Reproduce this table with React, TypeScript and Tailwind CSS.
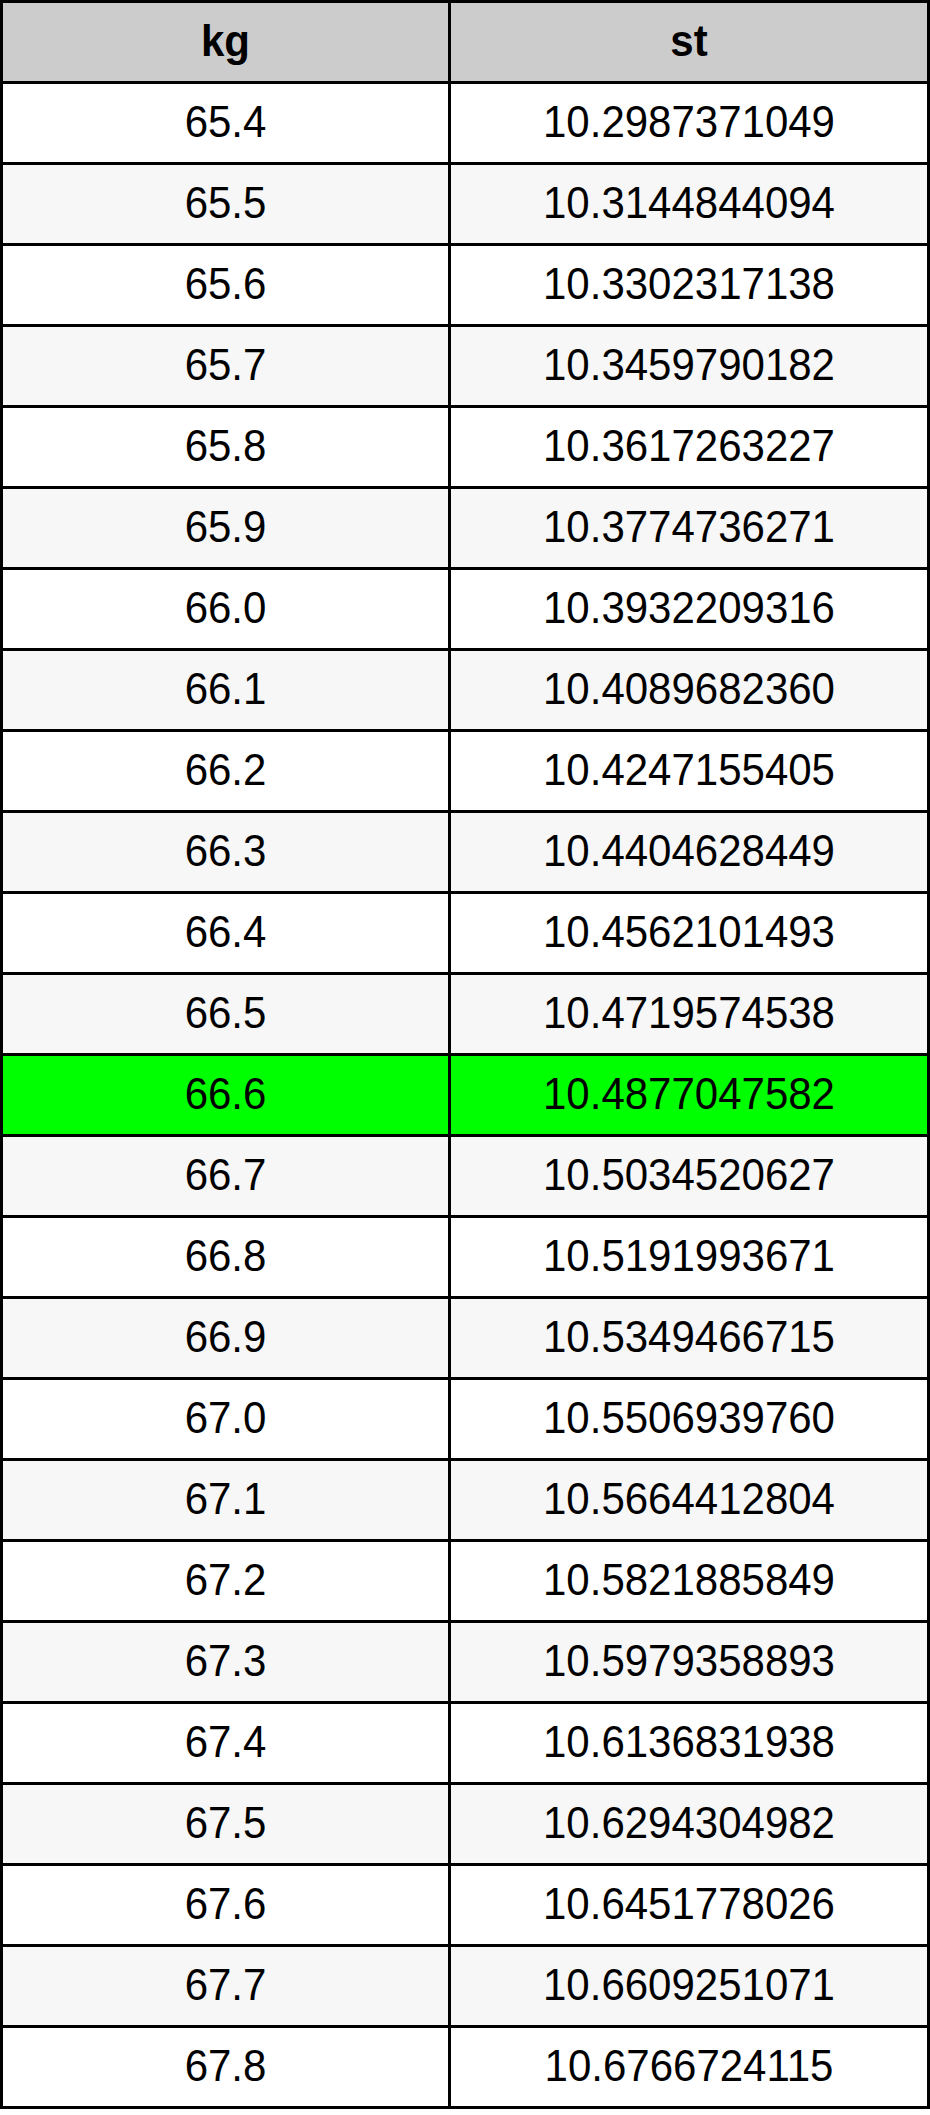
import React from "react";

const rows: [string, string][] = [
  ["65.4", "10.2987371049"],
  ["65.5", "10.3144844094"],
  ["65.6", "10.3302317138"],
  ["65.7", "10.3459790182"],
  ["65.8", "10.3617263227"],
  ["65.9", "10.3774736271"],
  ["66.0", "10.3932209316"],
  ["66.1", "10.4089682360"],
  ["66.2", "10.4247155405"],
  ["66.3", "10.4404628449"],
  ["66.4", "10.4562101493"],
  ["66.5", "10.4719574538"],
  ["66.6", "10.4877047582"],
  ["66.7", "10.5034520627"],
  ["66.8", "10.5191993671"],
  ["66.9", "10.5349466715"],
  ["67.0", "10.5506939760"],
  ["67.1", "10.5664412804"],
  ["67.2", "10.5821885849"],
  ["67.3", "10.5979358893"],
  ["67.4", "10.6136831938"],
  ["67.5", "10.6294304982"],
  ["67.6", "10.6451778026"],
  ["67.7", "10.6609251071"],
  ["67.8", "10.6766724115"],
];

export default function App() {
  return (
    <div className="w-[930px] bg-white text-black font-['Liberation_Sans',Arial,sans-serif]">
      <div className="border-[3px] border-black">
        <div className="flex h-[78px] bg-[#cccccc] text-[42px] font-bold leading-none">
          <div className="w-[448px] border-r-[3px] border-black flex items-center justify-center pb-[2px]">
            <span className="inline-block scale-y-[1.06]">kg</span>
          </div>
          <div className="flex-1 flex items-center justify-center pb-[2px]">
            <span className="inline-block scale-y-[1.06]">st</span>
          </div>
        </div>
        {rows.map(([kg, st], i) => {
          const bg =
            kg === "66.6"
              ? "bg-[#00ff00]"
              : i % 2 === 0
              ? "bg-white"
              : "bg-[#f7f7f7]";
          return (
            <div
              key={kg}
              className={`flex h-[81px] border-t-[3px] border-black text-[42px] leading-none ${bg}`}
            >
              <div className="w-[448px] border-r-[3px] border-black flex items-center justify-center pb-[2px]">
                <span className="inline-block scale-y-[1.06]">{kg}</span>
              </div>
              <div className="flex-1 flex items-center justify-center pb-[2px]">
                <span className="inline-block scale-y-[1.06]">{st}</span>
              </div>
            </div>
          );
        })}
      </div>
    </div>
  );
}
